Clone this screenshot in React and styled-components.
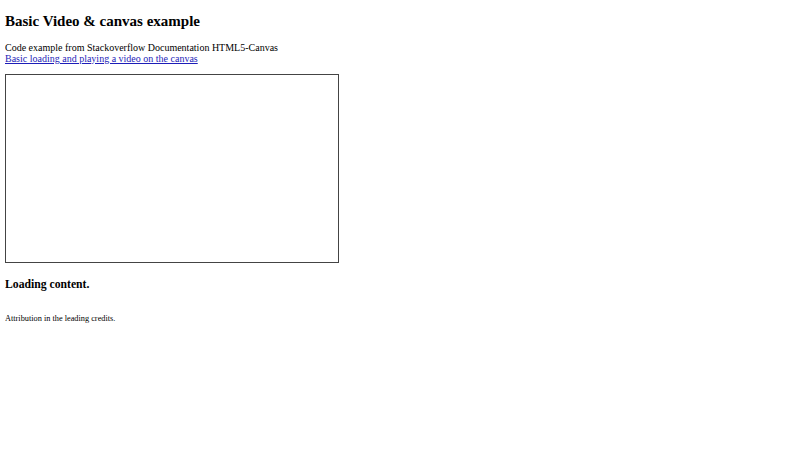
import React from "react";
import styled, { createGlobalStyle } from "styled-components";

const Global = createGlobalStyle`
  html, body {
    background: #fff;
  }
  body {
    margin: 5px;
    font-family: "Liberation Serif", "Times New Roman", serif;
    font-size: 10px;
    color: #000;
  }
`;

const Title = styled.h2`
  font-size: 15px;
  font-weight: bold;
  margin: 7.5px 0 12.45px;
`;

const Intro = styled.p`
  margin: 10px 0;
  line-height: normal;
  a {
    color: #1d1db8;
    text-decoration: underline;
  }
`;

const Screen = styled.div`
  width: 332px;
  height: 187px;
  border: 1px solid #444;
`;

const Status = styled.h3`
  font-size: 11.7px;
  font-weight: bold;
  margin: 15px 0 11.7px;
`;

const Credits = styled.p`
  margin: 10px 0;
  padding-top: 11.5px;
  font-size: 8.3px;
`;

export default function App() {
  return (
    <>
      <Global />
      <Title>Basic Video &amp; canvas example</Title>
      <Intro>
        Code example from Stackoverflow Documentation HTML5-Canvas
        <br />
        <a href="#">Basic loading and playing a video on the canvas</a>
      </Intro>
      <Screen />
      <Status>Loading content.</Status>
      <Credits>Attribution in the leading credits.</Credits>
    </>
  );
}
